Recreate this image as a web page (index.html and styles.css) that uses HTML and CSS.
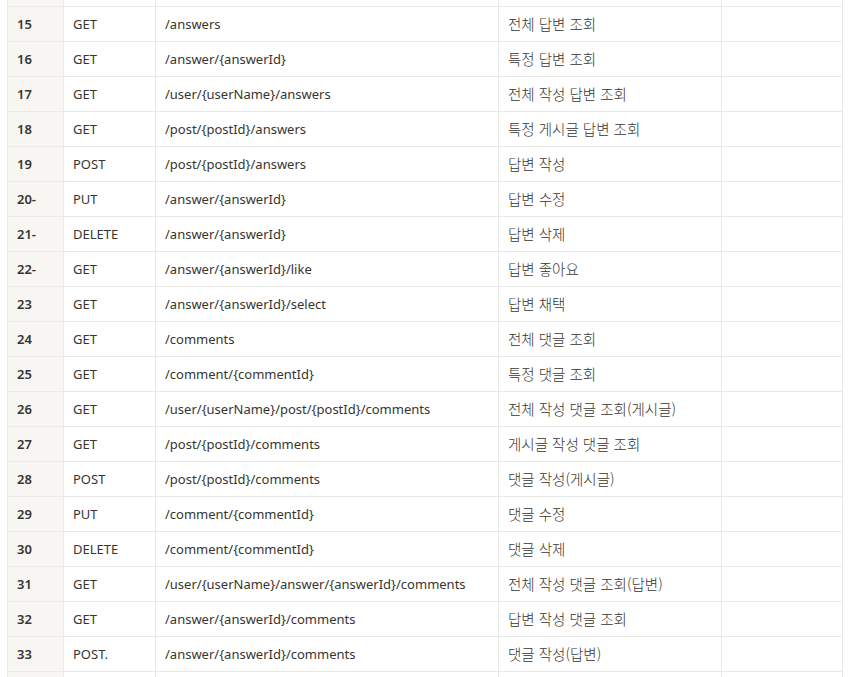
FILE: index.html
```
<!DOCTYPE html>
<html lang="ko">
<head>
<meta charset="utf-8">
<link rel="stylesheet" href="styles.css">
</head>
<body>
<div class="wrap">
<table class="api">
<colgroup><col class="c1"><col class="c2"><col class="c3"><col class="c4"><col class="c5"></colgroup>
<tbody>
<tr><td class="num"></td><td></td><td></td><td></td><td></td></tr>
<tr><td class="num">15</td><td>GET</td><td>/answers</td><td class="ko">전체 답변 조회</td><td></td></tr>
<tr><td class="num">16</td><td>GET</td><td>/answer/{answerId}</td><td class="ko">특정 답변 조회</td><td></td></tr>
<tr><td class="num">17</td><td>GET</td><td>/user/{userName}/answers</td><td class="ko">전체 작성 답변 조회</td><td></td></tr>
<tr><td class="num">18</td><td>GET</td><td>/post/{postId}/answers</td><td class="ko">특정 게시글 답변 조회</td><td></td></tr>
<tr><td class="num">19</td><td>POST</td><td>/post/{postId}/answers</td><td class="ko">답변 작성</td><td></td></tr>
<tr><td class="num">20-</td><td>PUT</td><td>/answer/{answerId}</td><td class="ko">답변 수정</td><td></td></tr>
<tr><td class="num">21-</td><td>DELETE</td><td>/answer/{answerId}</td><td class="ko">답변 삭제</td><td></td></tr>
<tr><td class="num">22-</td><td>GET</td><td>/answer/{answerId}/like</td><td class="ko">답변 좋아요</td><td></td></tr>
<tr><td class="num">23</td><td>GET</td><td>/answer/{answerId}/select</td><td class="ko">답변 채택</td><td></td></tr>
<tr><td class="num">24</td><td>GET</td><td>/comments</td><td class="ko">전체 댓글 조회</td><td></td></tr>
<tr><td class="num">25</td><td>GET</td><td>/comment/{commentId}</td><td class="ko">특정 댓글 조회</td><td></td></tr>
<tr><td class="num">26</td><td>GET</td><td>/user/{userName}/post/{postId}/comments</td><td class="ko">전체 작성 댓글 조회(게시글)</td><td></td></tr>
<tr><td class="num">27</td><td>GET</td><td>/post/{postId}/comments</td><td class="ko">게시글 작성 댓글 조회</td><td></td></tr>
<tr><td class="num">28</td><td>POST</td><td>/post/{postId}/comments</td><td class="ko">댓글 작성(게시글)</td><td></td></tr>
<tr><td class="num">29</td><td>PUT</td><td>/comment/{commentId}</td><td class="ko">댓글 수정</td><td></td></tr>
<tr><td class="num">30</td><td>DELETE</td><td>/comment/{commentId}</td><td class="ko">댓글 삭제</td><td></td></tr>
<tr><td class="num">31</td><td>GET</td><td>/user/{userName}/answer/{answerId}/comments</td><td class="ko">전체 작성 댓글 조회(답변)</td><td></td></tr>
<tr><td class="num">32</td><td>GET</td><td>/answer/{answerId}/comments</td><td class="ko">답변 작성 댓글 조회</td><td></td></tr>
<tr><td class="num">33</td><td>POST.</td><td>/answer/{answerId}/comments</td><td class="ko">댓글 작성(답변)</td><td></td></tr>
<tr><td class="num"></td><td></td><td></td><td></td><td></td></tr>
</tbody>
</table>
</div>
</body>
</html>
```

FILE: styles.css
```
html, body {
  margin: 0;
  padding: 0;
  background: #ffffff;
  overflow: hidden;
}
.wrap {
  padding-left: 7px;
  height: 677px;
  overflow: hidden;
}
.api {
  border-collapse: collapse;
  table-layout: fixed;
  width: 835px;
  margin-top: -29px;
  font-family: "Noto Sans", "Noto Sans CJK KR", sans-serif;
  font-size: 13px;
  color: rgb(55, 53, 47);
}
.c1 { width: 56px; }
.c2 { width: 92px; }
.c3 { width: 343px; }
.c4 { width: 223px; }
.c5 { width: 121px; }
.api td {
  border: 1px solid #e9e9e7;
  height: 35px;
  padding: 0 9px;
  box-sizing: border-box;
  white-space: nowrap;
  overflow: hidden;
  vertical-align: middle;
  line-height: 20px;
}
.api td.num {
  background: #f7f6f3;
  font-weight: 600;
}
.api td.ko {
  font-family: "Noto Sans CJK KR", "Noto Sans", sans-serif;
  font-size: 14.5px;
  font-weight: 300;
}
```
